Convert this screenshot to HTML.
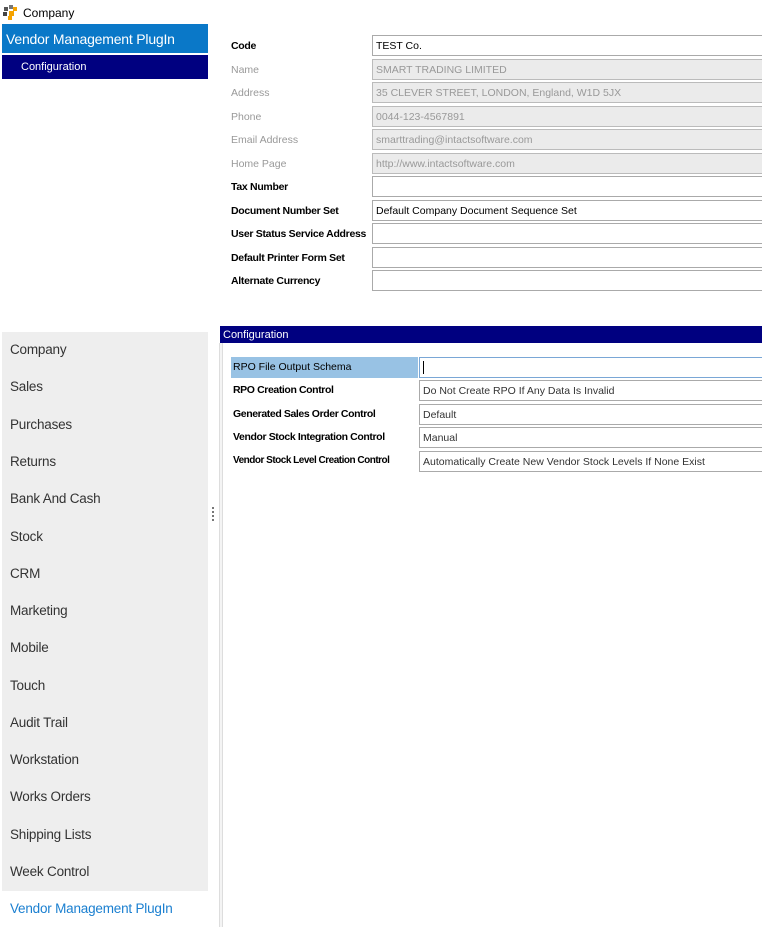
<!DOCTYPE html>
<html><head><meta charset="utf-8"><style>
*{margin:0;padding:0;box-sizing:border-box}
body{width:762px;height:927px;overflow:hidden;background:#fff;font-family:"Liberation Sans",sans-serif;position:relative;color:#000}
.a{position:absolute;white-space:nowrap}
.nav{left:10px;font-size:13.5px;color:#333;letter-spacing:-0.2px}
.lbl{left:231px;font-size:10.5px;font-weight:bold;color:#000;letter-spacing:-0.3px}
.lbl.g{font-weight:normal;color:#999;letter-spacing:0}
.box{left:372px;width:400px;height:21px;border:1px solid #aaa;font-size:10.5px;padding:4px 0 0 3px;background:#fff}
.box.g{background:#ebebeb;color:#999;border-color:#bbb}
.cl{left:231px;width:187px;height:21px;font-size:10.5px;font-weight:bold;padding:4px 0 0 2px;letter-spacing:-0.4px}
.cb{left:419px;width:360px;height:21px;border:1px solid #aaa;font-size:10.5px;padding:4px 0 0 3px;color:#333}
</style></head><body>
<svg class="a" style="left:2px;top:4px" width="16" height="16" viewBox="0 0 16 16"><rect x="2" y="3" width="4" height="4" fill="#555"/><rect x="7" y="1" width="4" height="4" fill="#777"/><rect x="1" y="8" width="4" height="4" fill="#444"/><rect x="7" y="7" width="5" height="5" fill="#f5a300"/><rect x="11" y="3" width="4" height="4" fill="#f5a300"/><rect x="6" y="12" width="4" height="4" fill="#f5a300"/></svg>
<div class="a" style="left:23px;top:6px;font-size:12px">Company</div>
<div class="a" style="left:2px;top:24px;width:206px;height:29px;background:#0a78c8;color:#fff;font-size:14px;padding:7px 0 0 4px;letter-spacing:-0.2px">Vendor Management PlugIn</div>
<div class="a" style="left:2px;top:55px;width:206px;height:24px;background:#000080;color:#fff;font-size:11px;padding:6px 0 0 19px">Configuration</div>
<div class="a" style="left:2px;top:332px;width:206px;height:559px;background:#eee"></div>
<div class="a nav" style="top:342px">Company</div>
<div class="a nav" style="top:379px">Sales</div>
<div class="a nav" style="top:417px">Purchases</div>
<div class="a nav" style="top:454px">Returns</div>
<div class="a nav" style="top:491px">Bank And Cash</div>
<div class="a nav" style="top:529px">Stock</div>
<div class="a nav" style="top:566px">CRM</div>
<div class="a nav" style="top:603px">Marketing</div>
<div class="a nav" style="top:640px">Mobile</div>
<div class="a nav" style="top:678px">Touch</div>
<div class="a nav" style="top:715px">Audit Trail</div>
<div class="a nav" style="top:752px">Workstation</div>
<div class="a nav" style="top:789px">Works Orders</div>
<div class="a nav" style="top:827px">Shipping Lists</div>
<div class="a nav" style="top:864px">Week Control</div>
<div class="a nav" style="top:901px;color:#1a7fd0">Vendor Management PlugIn</div>
<div class="a" style="left:212px;top:507px;width:2px;height:14px;background:repeating-linear-gradient(#777 0 2px,transparent 2px 4px)"></div>

<div class="a lbl" style="top:40px">Code</div><div class="a box" style="top:35px">TEST Co.</div>
<div class="a lbl g" style="top:64px">Name</div><div class="a box g" style="top:59px">SMART TRADING LIMITED</div>
<div class="a lbl g" style="top:87px">Address</div><div class="a box g" style="top:82px">35 CLEVER STREET, LONDON, England, W1D 5JX</div>
<div class="a lbl g" style="top:111px">Phone</div><div class="a box g" style="top:106px">0044-123-4567891</div>
<div class="a lbl g" style="top:134px">Email Address</div><div class="a box g" style="top:129px">smarttrading@intactsoftware.com</div>
<div class="a lbl g" style="top:158px">Home Page</div><div class="a box g" style="top:153px">http://www.intactsoftware.com</div>
<div class="a lbl" style="top:181px">Tax Number</div><div class="a box" style="top:176px"></div>
<div class="a lbl" style="top:205px">Document Number Set</div><div class="a box" style="top:200px">Default Company Document Sequence Set</div>
<div class="a lbl" style="top:228px">User Status Service Address</div><div class="a box" style="top:223px"></div>
<div class="a lbl" style="top:252px">Default Printer Form Set</div><div class="a box" style="top:247px"></div>
<div class="a lbl" style="top:275px">Alternate Currency</div><div class="a box" style="top:270px"></div>

<div class="a" style="left:220px;top:326px;width:542px;height:17px;background:#000080;color:#fff;font-size:11px;padding:3px 0 0 3px">Configuration</div>
<div class="a" style="left:219px;top:343px;width:4px;height:584px;border-left:1px solid #ddd;border-right:1px solid #ddd;background:#f4f4f4"></div>
<div class="a cl" style="top:357px;background:#98c2e4;font-weight:normal;letter-spacing:0">RPO File Output Schema</div><div class="a cb" style="top:357px;border-color:#7aa7d6;padding-top:3px"><span style="display:inline-block;width:1px;height:13px;background:#000"></span></div>
<div class="a cl" style="top:380px">RPO Creation Control</div><div class="a cb" style="top:380px">Do Not Create RPO If Any Data Is Invalid</div>
<div class="a cl" style="top:404px">Generated Sales Order Control</div><div class="a cb" style="top:404px">Default</div>
<div class="a cl" style="top:427px">Vendor Stock Integration Control</div><div class="a cb" style="top:427px">Manual</div>
<div class="a cl" style="top:451px;font-size:10px;letter-spacing:-0.5px">Vendor Stock Level Creation Control</div><div class="a cb" style="top:451px">Automatically Create New Vendor Stock Levels If None Exist</div>
</body></html>
